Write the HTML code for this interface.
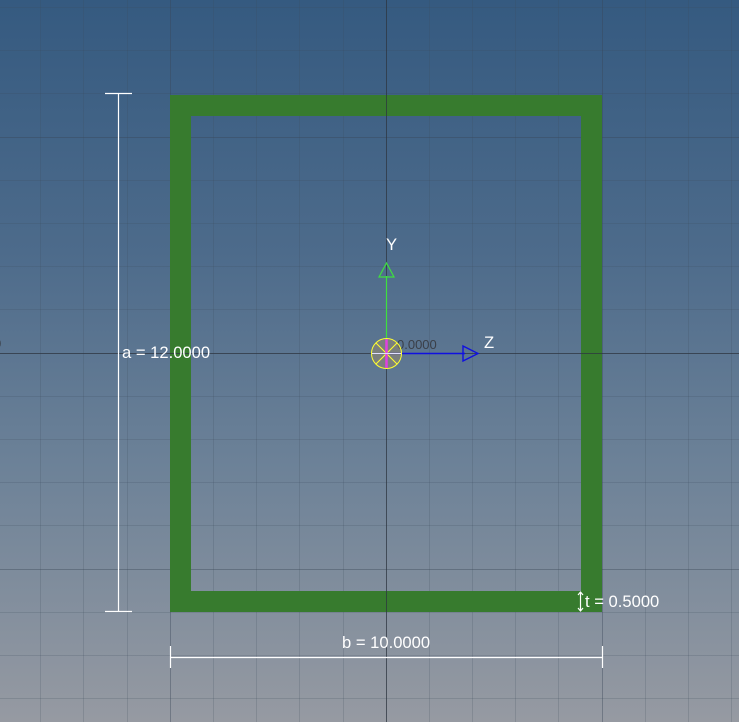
<!DOCTYPE html>
<html><head><meta charset="utf-8"><style>
html,body{margin:0;padding:0;width:739px;height:722px;overflow:hidden}
body{background:linear-gradient(#355a80 0%,#4d6b8b 35%,#6d8298 65%,#969aa2 100%)}
svg{position:absolute;left:0;top:0}
text{font-family:"Liberation Sans",sans-serif}
</style></head><body>
<svg width="739" height="722" viewBox="0 0 739 722">
<g stroke="#3a4a5c" stroke-opacity="0.2" stroke-width="1">
<line x1="40.5" y1="0" x2="40.5" y2="722"/><line x1="83.5" y1="0" x2="83.5" y2="722"/><line x1="127.5" y1="0" x2="127.5" y2="722"/>
<line x1="213.5" y1="0" x2="213.5" y2="722"/><line x1="256.5" y1="0" x2="256.5" y2="722"/><line x1="299.5" y1="0" x2="299.5" y2="722"/><line x1="343.5" y1="0" x2="343.5" y2="722"/>
<line x1="429.5" y1="0" x2="429.5" y2="722"/><line x1="472.5" y1="0" x2="472.5" y2="722"/><line x1="515.5" y1="0" x2="515.5" y2="722"/><line x1="558.5" y1="0" x2="558.5" y2="722"/>
<line x1="645.5" y1="0" x2="645.5" y2="722"/><line x1="688.5" y1="0" x2="688.5" y2="722"/><line x1="731.5" y1="0" x2="731.5" y2="722"/>
<line x1="0" y1="7.5" x2="739" y2="7.5"/><line x1="0" y1="50.5" x2="739" y2="50.5"/><line x1="0" y1="93.5" x2="739" y2="93.5"/>
<line x1="0" y1="180.5" x2="739" y2="180.5"/><line x1="0" y1="223.5" x2="739" y2="223.5"/><line x1="0" y1="266.5" x2="739" y2="266.5"/><line x1="0" y1="309.5" x2="739" y2="309.5"/>
<line x1="0" y1="396.5" x2="739" y2="396.5"/><line x1="0" y1="439.5" x2="739" y2="439.5"/><line x1="0" y1="482.5" x2="739" y2="482.5"/><line x1="0" y1="525.5" x2="739" y2="525.5"/>
<line x1="0" y1="612.5" x2="739" y2="612.5"/><line x1="0" y1="655.5" x2="739" y2="655.5"/><line x1="0" y1="698.5" x2="739" y2="698.5"/>
</g>
<g stroke="#3a4658" stroke-opacity="0.4" stroke-width="1">
<line x1="170.5" y1="0" x2="170.5" y2="722"/><line x1="602.5" y1="0" x2="602.5" y2="722"/>
<line x1="0" y1="137.5" x2="739" y2="137.5"/><line x1="0" y1="569.5" x2="739" y2="569.5"/>
</g>
<path d="M170 95H602V612H170Z M191 116V591H581V116Z" fill="#377b2e" fill-rule="evenodd"/>
<g stroke="#2e3640" stroke-opacity="0.75" stroke-width="1">
<line x1="386.5" y1="0" x2="386.5" y2="722"/><line x1="0" y1="353.5" x2="739" y2="353.5"/>
</g>
<text x="-6" y="348" font-size="13" fill="#3a3f48">0</text>
<text x="397" y="349" font-size="13" fill="#3a3f48">0.0000</text>
<g stroke="#fff" stroke-width="1.2" fill="none">
<line x1="118.5" y1="93" x2="118.5" y2="612"/><line x1="105" y1="93.5" x2="132" y2="93.5"/><line x1="105" y1="611.5" x2="132" y2="611.5"/>
<line x1="170" y1="657.5" x2="602" y2="657.5"/><line x1="170.5" y1="646" x2="170.5" y2="668"/><line x1="602.5" y1="646" x2="602.5" y2="668"/>
<line x1="580.5" y1="592" x2="580.5" y2="611"/><path d="M578 595l2.5-3 2.5 3M578 608l2.5 3 2.5-3"/>
</g>
<text x="122" y="358" font-size="16.6" fill="#fff">a = 12.0000</text>
<text x="342" y="648" font-size="16.6" fill="#fff">b = 10.0000</text>
<text x="585" y="607" font-size="16.6" fill="#fff">t = 0.5000</text>
<line x1="386.5" y1="276" x2="386.5" y2="353" stroke="#3ee03e" stroke-width="1.2"/>
<path d="M386.5 263L379 277H394Z" fill="none" stroke="#3ee03e" stroke-width="1.2"/>
<line x1="386" y1="353.5" x2="465" y2="353.5" stroke="#1010e0" stroke-width="1.4"/>
<path d="M478 353.5L463 346V361Z" fill="none" stroke="#1010e0" stroke-width="1.4"/>
<text x="386" y="250" font-size="16.6" fill="#fff">Y</text>
<text x="484" y="348" font-size="16.6" fill="#fff">Z</text>
<circle cx="386.5" cy="353.5" r="15" fill="#9a8a6a" fill-opacity="0.5" stroke="#ffff30" stroke-width="1"/>
<g stroke="#ffff30" stroke-width="1"><line x1="376" y1="343" x2="397" y2="364"/><line x1="397" y1="343" x2="376" y2="364"/></g>
<line x1="386.5" y1="339" x2="386.5" y2="368" stroke="#e040e0" stroke-width="2.5"/>
<line x1="372" y1="353.5" x2="401" y2="353.5" stroke="#e0e0ff" stroke-width="1"/>
</svg>
</body></html>
